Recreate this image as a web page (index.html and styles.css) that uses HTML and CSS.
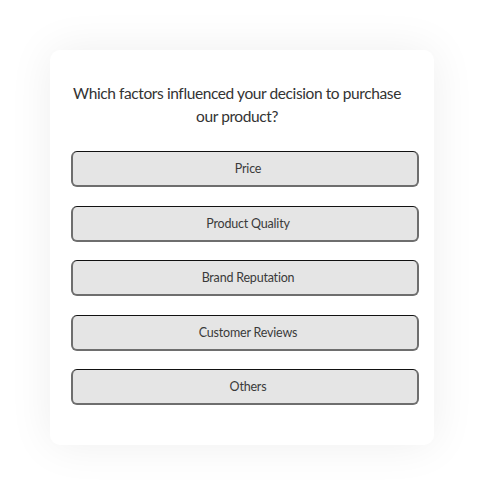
FILE: index.html
```html
<!DOCTYPE html>
<html lang="en">
<head>
  <meta charset="UTF-8" />
  <title>Survey</title>
  <link rel="stylesheet" href="styles.css">
</head>
<body>
  <div class="card">
    <h2 class="question">Which factors influenced your decision to purchase our product?</h2>
    <div class="options">
      <button class="option">Price</button>
      <button class="option">Product Quality</button>
      <button class="option">Brand Reputation</button>
      <button class="option">Customer Reviews</button>
      <button class="option">Others</button>
    </div>
  </div>
</body>
</html>
```

FILE: styles.css
```css
* {
  box-sizing: border-box;
}

body {
  margin: 0;
  padding: 50px;
  background: #fff;
  font-family: Lato, 'Noto Sans', sans-serif;
  color: #333;
}

.card {
  width: 384px;
  height: 395px;
  background: #fff;
  border-radius: 10px;
  box-shadow: 0 0 45px rgba(0, 0, 0, 0.07);
  padding: 32px 15px 40px 21px;
}

.question {
  margin: 0 14px 23px -2px;
  font-size: 15.5px;
  font-weight: 400;
  line-height: 23px;
  letter-spacing: -0.4px;
  text-align: center;
  color: #333;
}

.options {
  display: flex;
  flex-direction: column;
  gap: 18.5px;
}

.option {
  height: 36px;
  width: 100%;
  padding: 0 0 0 6px;
  background: #e5e5e5;
  border: 2px solid #6e6e6e;
  border-top: 1px solid #111;
  border-radius: 6px;
  font-family: inherit;
  font-size: 12.5px;
  letter-spacing: -0.2px;
  color: #3a3a3a;
  cursor: pointer;
}
```
